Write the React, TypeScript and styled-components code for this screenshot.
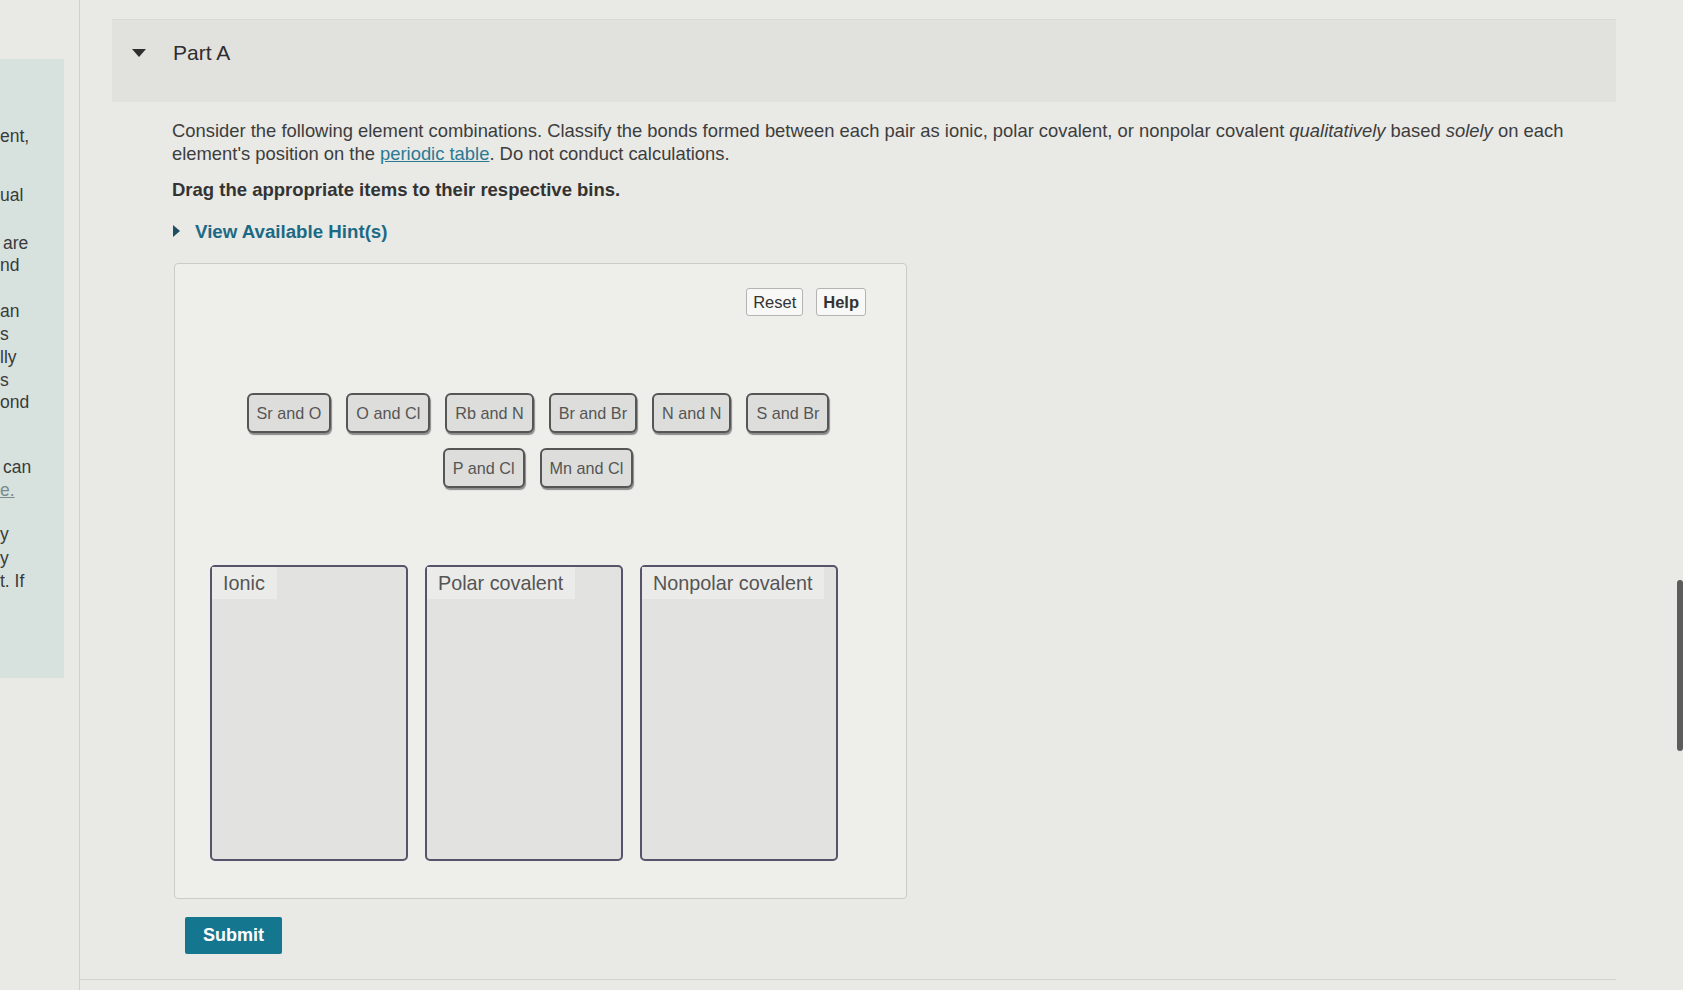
import React from 'react';
import styled, { createGlobalStyle } from 'styled-components';

const GlobalStyle = createGlobalStyle`
  html, body {
    margin: 0;
    padding: 0;
    background: #e9e9e6;
  }
  body {
    font-family: "Liberation Sans", Arial, sans-serif;
    color: #3b3b3b;
    overflow: hidden;
  }
`;

const Page = styled.div`
  position: relative;
  display: flex;
  width: 1683px;
  height: 990px;
`;

const Sidebar = styled.aside`
  width: 80px;
  flex-shrink: 0;
  box-sizing: border-box;
  padding-top: 59px;
  border-right: 1px solid #d0d0cd;
`;

const NotePanel = styled.div`
  width: 64px;
  height: 619px;
  overflow: hidden;
  background: #d7e2de;
  font-size: 17.5px;
  color: #3a3a3a;
`;

const NoteLine = styled.div<{ $gap: number; $indent?: number; $link?: boolean }>`
  height: 22px;
  line-height: 22px;
  margin-top: ${p => p.$gap}px;
  padding-left: ${p => p.$indent ?? 0}px;
  white-space: nowrap;
  color: ${p => (p.$link ? '#7a8c8c' : '#3a3a3a')};
  text-decoration: ${p => (p.$link ? 'underline' : 'none')};
`;

const Main = styled.main`
  width: 1536px;
  height: 980px;
  box-sizing: border-box;
  padding: 19px 0 0 32px;
  border-bottom: 1px solid #d3d3d0;
`;

const PartHeader = styled.div`
  display: flex;
  align-items: flex-start;
  height: 83px;
  box-sizing: border-box;
  padding: 21px 0 0 20px;
  background: #e1e1de;
  border-top: 1px solid #d8d8d5;
`;

const Caret = styled.span`
  width: 0;
  height: 0;
  margin-top: 8px;
  border-left: 7px solid transparent;
  border-right: 7px solid transparent;
  border-top: 8px solid #2f2f2f;
`;

const PartTitle = styled.h2`
  margin: 0 0 0 27px;
  font-size: 21px;
  line-height: 24px;
  font-weight: 400;
  color: #2e2e2e;
`;

const Body = styled.section`
  padding-left: 60px;
`;

const Prompt = styled.p`
  margin: 18px 0 0;
  padding-right: 20px;
  font-size: 18.4px;
  line-height: 22.5px;
  color: #3d3d3d;
`;

const TableLink = styled.a`
  color: #2b7993;
  text-decoration: underline;
`;

const Instruction = styled.p`
  margin: 14px 0 0;
  font-size: 18.5px;
  line-height: 22px;
  font-weight: 700;
  color: #333;
`;

const HintToggle = styled.div`
  display: flex;
  align-items: center;
  margin-top: 20px;
  height: 22px;
  font-size: 18.7px;
  font-weight: 700;
  color: #1d6a84;
`;

const HintCaret = styled.span`
  width: 0;
  height: 0;
  margin: 0 15px 2px 1px;
  border-top: 6px solid transparent;
  border-bottom: 6px solid transparent;
  border-left: 7px solid #1f4f62;
`;

const DragBox = styled.div`
  display: flex;
  flex-direction: column;
  width: 733px;
  height: 636px;
  box-sizing: border-box;
  margin: 20px 0 0 2px;
  padding: 24px 40px 0 35px;
  background: #eeeeeb;
  border: 1px solid #cbcbc8;
  border-radius: 4px;
`;

const Toolbar = styled.div`
  display: flex;
  justify-content: flex-end;
  gap: 13px;
`;

const ToolButton = styled.button<{ $bold?: boolean }>`
  height: 28px;
  padding: 0 6px;
  font-family: inherit;
  font-size: 16.5px;
  font-weight: ${p => (p.$bold ? 700 : 400)};
  color: #333;
  background: #f8f8f6;
  border: 1px solid #b4b4b2;
  border-radius: 3px;
`;

const ChipArea = styled.div`
  display: flex;
  flex-wrap: wrap;
  justify-content: center;
  gap: 15px;
  width: 640px;
  margin: 77px auto 0;
`;

const Chip = styled.div`
  display: flex;
  align-items: center;
  height: 40px;
  box-sizing: border-box;
  padding: 0 8px;
  font-size: 16.2px;
  color: #555;
  background: #dddddb;
  border: 2px solid #565656;
  border-radius: 6px;
  box-shadow: 1px 2px 1px rgba(60, 60, 60, 0.55);
`;

const BinRow = styled.div`
  display: flex;
  gap: 17px;
  margin-top: 77px;
`;

const Bin = styled.div`
  display: flex;
  flex-direction: column;
  align-items: flex-start;
  width: 198px;
  height: 296px;
  box-sizing: border-box;
  background: #e2e2e0;
  border: 2px solid #57536b;
  border-radius: 5px;
`;

const BinLabel = styled.span`
  height: 32px;
  line-height: 32px;
  padding: 0 12px 0 11px;
  font-size: 19.8px;
  color: #555;
  background: #ebebe9;
`;

const SubmitButton = styled.button`
  width: 97px;
  height: 37px;
  margin: 18px 0 0 13px;
  font-family: inherit;
  font-size: 18px;
  font-weight: 700;
  color: #fff;
  background: #15778f;
  border: none;
  border-radius: 2px;
`;

const ScrollThumb = styled.div`
  position: absolute;
  right: 0;
  top: 580px;
  width: 6px;
  height: 171px;
  background: #5c5c5c;
  border-radius: 3px;
`;

const notes = [
  { text: 'ent,', y: 136 },
  { text: 'ual', y: 195 },
  { text: 'are', y: 243, indent: 3 },
  { text: 'nd', y: 265 },
  { text: 'an', y: 311 },
  { text: 's', y: 334 },
  { text: 'lly', y: 357 },
  { text: 's', y: 380 },
  { text: 'ond', y: 402 },
  { text: 'can', y: 467, indent: 3 },
  { text: 'e.', y: 490, link: true },
  { text: 'y', y: 534 },
  { text: 'y', y: 558 },
  { text: 't. If', y: 581 },
];

const items = [
  'Sr and O',
  'O and Cl',
  'Rb and N',
  'Br and Br',
  'N and N',
  'S and Br',
  'P and Cl',
  'Mn and Cl',
];

const bins = ['Ionic', 'Polar covalent', 'Nonpolar covalent'];

export default function App() {
  return (
    <>
      <GlobalStyle />
      <Page>
        <Sidebar>
          <NotePanel>
            {notes.map((n, i) => {
              // gap between line centres, minus one line box
              const gap = i === 0 ? n.y - 59 - 11 : n.y - notes[i - 1].y - 22;
              return (
                <NoteLine key={i} $gap={gap} $indent={n.indent} $link={n.link}>
                  {n.text}
                </NoteLine>
              );
            })}
          </NotePanel>
        </Sidebar>

        <Main>
          <PartHeader>
            <Caret />
            <PartTitle>Part A</PartTitle>
          </PartHeader>

          <Body>
            <Prompt>
              Consider the following element combinations. Classify the bonds formed between each pair as ionic, polar
              covalent, or nonpolar covalent <em>qualitatively</em> based <em>solely</em> on each element's position on
              the <TableLink>periodic table</TableLink>. Do not conduct calculations.
            </Prompt>
            <Instruction>Drag the appropriate items to their respective bins.</Instruction>
            <HintToggle>
              <HintCaret />
              View Available Hint(s)
            </HintToggle>

            <DragBox>
              <Toolbar>
                <ToolButton>Reset</ToolButton>
                <ToolButton $bold>Help</ToolButton>
              </Toolbar>
              <ChipArea>
                {items.map(item => (
                  <Chip key={item}>{item}</Chip>
                ))}
              </ChipArea>
              <BinRow>
                {bins.map(b => (
                  <Bin key={b}>
                    <BinLabel>{b}</BinLabel>
                  </Bin>
                ))}
              </BinRow>
            </DragBox>

            <SubmitButton>Submit</SubmitButton>
          </Body>
        </Main>
        <ScrollThumb />
      </Page>
    </>
  );
}
